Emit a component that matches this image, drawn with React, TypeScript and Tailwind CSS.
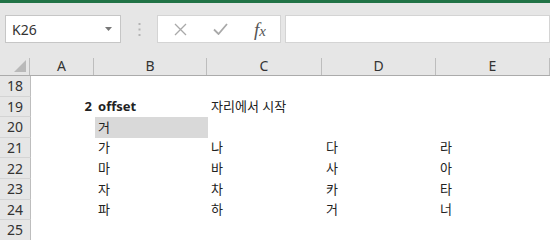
import React from "react";

const cols = [
	{ name: "A", w: "w-[64px]" },
	{ name: "B", w: "w-[113px]" },
	{ name: "C", w: "w-[115px]" },
	{ name: "D", w: "w-[114px]" },
	{ name: "E", w: "w-[114px]" },
];

type Cell = { text?: string; bold?: boolean; right?: boolean; fill?: boolean };

const rows: { n: number; cells: Cell[] }[] = [
	{ n: 18, cells: [{}, {}, {}, {}, {}] },
	{ n: 19, cells: [{ text: "2", bold: true, right: true }, { text: "offset", bold: true }, { text: "자리에서 시작" }, {}, {}] },
	{ n: 20, cells: [{}, { text: "거", fill: true }, {}, {}, {}] },
	{ n: 21, cells: [{}, { text: "가" }, { text: "나" }, { text: "다" }, { text: "라" }] },
	{ n: 22, cells: [{}, { text: "마" }, { text: "바" }, { text: "사" }, { text: "아" }] },
	{ n: 23, cells: [{}, { text: "자" }, { text: "차" }, { text: "카" }, { text: "타" }] },
	{ n: 24, cells: [{}, { text: "파" }, { text: "하" }, { text: "거" }, { text: "너" }] },
	{ n: 25, cells: [{}, {}, {}, {}, {}] },
];

const App: React.FC = () => {
	return (
		<div className="w-[550px] h-[240px] overflow-hidden bg-white font-['Noto_Sans','Noto_Sans_CJK_KR',sans-serif]">
			<div className="h-[3px] bg-[#217346]" />
			{/* formula bar */}
			<div className="h-[52px] bg-[#e6e6e6] flex items-start pt-[12px]">
				<div className="ml-[5px] w-[116px] h-[28px] bg-white border border-[#c6c6c6] flex items-center justify-between pl-[6px] pr-[8px]">
					<span className="text-[14px] text-[#333]">K26</span>
					<svg width="7" height="4" viewBox="0 0 7 4"><path d="M0 0h7L3.5 4z" fill="#777" /></svg>
				</div>
				<div className="w-[36px] h-[28px] flex items-center justify-center">
					<svg width="3" height="13" viewBox="0 0 3 13">
						<rect x="0.5" y="0" width="2" height="2" fill="#b3b3b3" />
						<rect x="0.5" y="5.5" width="2" height="2" fill="#b3b3b3" />
						<rect x="0.5" y="11" width="2" height="2" fill="#b3b3b3" />
					</svg>
				</div>
				<div className="w-[124px] h-[28px] bg-white border border-[#d4d4d4] flex items-center">
					<div className="w-[40px] flex justify-center ml-[2px]">
						<svg width="13" height="13" viewBox="0 0 13 13"><path d="M1 1l11 11M12 1L1 12" stroke="#a9a9a9" strokeWidth="1.3" /></svg>
					</div>
					<div className="w-[40px] flex justify-center">
						<svg width="15" height="12" viewBox="0 0 15 12"><path d="M1 6.5l4.5 4.5L14 1" stroke="#a9a9a9" strokeWidth="1.8" fill="none" /></svg>
					</div>
					<div className="w-[40px] flex justify-center">
						<span className="font-['Liberation_Serif',serif] italic text-[19px] text-[#555] leading-none">f<span className="text-[15px]">x</span></span>
					</div>
				</div>
				<div className="ml-[4px] flex-1 h-[28px] bg-white border border-[#d4d4d4]" />
			</div>
			{/* column header */}
			<div className="flex h-[21px] bg-[#e6e6e6] border-b border-[#ababab]">
				<div className="w-[31px] relative border-r border-[#bdbdbd] mt-[3px]">
					<svg className="absolute right-[3px] bottom-[3px]" width="12" height="12" viewBox="0 0 12 12"><path d="M12 0V12H0z" fill="#b9b9b9" /></svg>
				</div>
				{cols.map((c) => (
					<div key={c.name} className={`${c.w} shrink-0 flex items-end justify-center pb-[1px] border-r border-[#bdbdbd] mt-[3px] text-[14px] text-[#333] leading-[17px]`}>
						{c.name}
					</div>
				))}
			</div>
			{/* rows */}
			{rows.map((r) => (
				<div key={r.n} className="flex h-[20.6px]">
					<div className="w-[31px] shrink-0 bg-[#e6e6e6] border-r border-[#bdbdbd] border-b border-b-[#d4d4d4] flex items-center justify-center text-[14px] text-[#333]">
						{r.n}
					</div>
					{r.cells.map((c, i) => (
						<div
							key={i}
							className={`${cols[i].w} shrink-0 flex items-center px-[3px] text-[13px] text-[#222] whitespace-nowrap ${c.right ? "justify-end" : ""} ${c.bold ? "font-bold" : ""} ${c.fill ? "bg-[#d9d9d9]" : ""}`}
						>
							{c.text}
						</div>
					))}
				</div>
			))}
		</div>
	);
};

export default App;
